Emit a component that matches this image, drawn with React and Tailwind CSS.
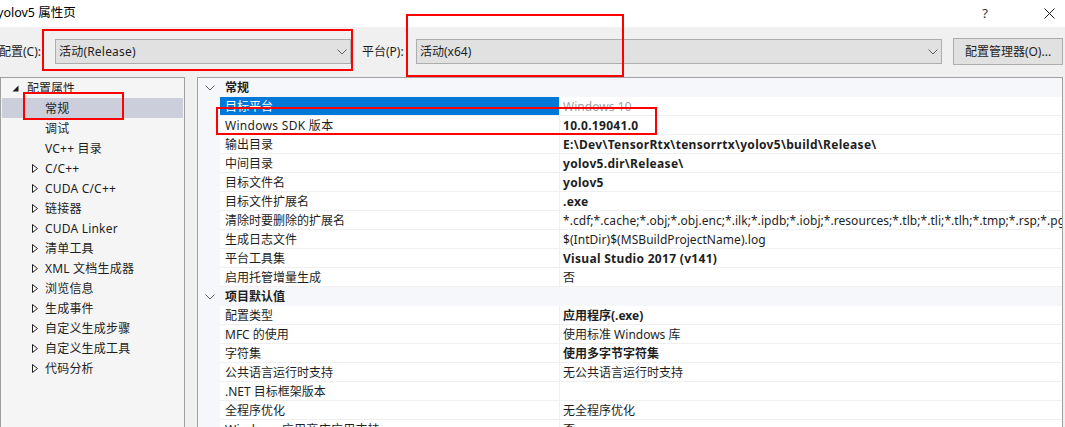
import React from "react";

const font = { fontFamily: '"Noto Sans", "Noto Sans CJK SC", sans-serif' };

const isLatin = (s) => /^[\x00-\x7f]+$/.test(s);

function Chevron({ className = "" }) {
  return (
    <svg width="10" height="6" viewBox="0 0 10 6" className={className}>
      <path d="M0.5 0.5 L5 5 L9.5 0.5" fill="none" stroke="#606060" strokeWidth="1" />
    </svg>
  );
}

function TriOpen() {
  return (
    <svg width="7" height="7" viewBox="0 0 7 7">
      <path d="M6.5 0.5 L6.5 6.5 L0.5 6.5 Z" fill="#1e1e1e" />
    </svg>
  );
}

function TriClosed() {
  return (
    <svg width="6" height="9" viewBox="0 0 6 9">
      <path d="M0.5 0.5 L5.5 4.5 L0.5 8.5 Z" fill="none" stroke="#1e1e1e" strokeWidth="1" />
    </svg>
  );
}

const tree = [
  { t: "常规", sel: true },
  { t: "调试" },
  { t: "VC++ 目录" },
  { t: "C/C++", c: true },
  { t: "CUDA C/C++", c: true },
  { t: "链接器", c: true },
  { t: "CUDA Linker", c: true },
  { t: "清单工具", c: true },
  { t: "XML 文档生成器", c: true },
  { t: "浏览信息", c: true },
  { t: "生成事件", c: true },
  { t: "自定义生成步骤", c: true },
  { t: "自定义生成工具", c: true },
  { t: "代码分析", c: true },
];

const groups = [
  {
    h: "常规",
    rows: [
      { n: "目标平台", v: "Windows 10", sel: true },
      { n: "Windows SDK 版本", v: "10.0.19041.0", b: true },
      { n: "输出目录", v: "E:\\Dev\\TensorRtx\\tensorrtx\\yolov5\\build\\Release\\", b: true },
      { n: "中间目录", v: "yolov5.dir\\Release\\", b: true },
      { n: "目标文件名", v: "yolov5", b: true },
      { n: "目标文件扩展名", v: ".exe", b: true },
      { n: "清除时要删除的扩展名", v: "*.cdf;*.cache;*.obj;*.obj.enc;*.ilk;*.ipdb;*.iobj;*.resources;*.tlb;*.tli;*.tlh;*.tmp;*.rsp;*.pgc;*.pgd;*.meta;*.tlog;*.manifest;*.res;*.pch;*.exp;*.idb;*.rep;*.xdc;*.pdb;*_manifest.rc;*.bsc;*.sbr;*.xml;*.metagen;*.bi" },
      { n: "生成日志文件", v: "$(IntDir)$(MSBuildProjectName).log" },
      { n: "平台工具集", v: "Visual Studio 2017 (v141)", b: true },
      { n: "启用托管增量生成", v: "否" },
    ],
  },
  {
    h: "项目默认值",
    rows: [
      { n: "配置类型", v: "应用程序(.exe)", b: true },
      { n: "MFC 的使用", v: "使用标准 Windows 库" },
      { n: "字符集", v: "使用多字节字符集", b: true },
      { n: "公共语言运行时支持", v: "无公共语言运行时支持" },
      { n: ".NET 目标框架版本", v: "" },
      { n: "全程序优化", v: "无全程序优化" },
      { n: "Windows 应用商店应用支持", v: "否" },
    ],
  },
];

export default function App() {
  return (
    <div
      className="relative w-[1065px] h-[427px] overflow-hidden bg-[#f0f0f0] text-[12px] text-[#1e1e1e] flex flex-col"
      style={font}
    >
      {/* title bar */}
      <div className="h-[27px] bg-white flex items-center shrink-0">
        <span className="ml-[-3px] text-[12.5px] text-black">yolov5 属性页</span>
        <span className="ml-auto mr-[56px] text-[13px] text-[#333]">?</span>
        <svg width="11" height="11" viewBox="0 0 11 11" className="mr-[10px]">
          <path d="M0.5 0.5 L10.5 10.5 M10.5 0.5 L0.5 10.5" stroke="#222" strokeWidth="1" />
        </svg>
      </div>

      {/* toolbar */}
      <div className="h-[50px] flex items-center shrink-0 pb-[1px]">
        <span className="ml-[-1px] w-[56px] whitespace-nowrap pt-[1px]">配置(C):</span>
        <div className="w-[296px] h-[25px] bg-[#e1e1e1] border border-[#adadad] flex items-center pl-[3px] pr-[3px]">
          <span className="pt-[1px] tracking-[0.2px]">活动(Release)</span>
          <Chevron className="ml-auto" />
        </div>
        <span className="ml-[11px] w-[54px] whitespace-nowrap pt-[1px]">平台(P):</span>
        <div className="w-[526px] h-[25px] bg-[#e1e1e1] border border-[#adadad] flex items-center pl-[3px] pr-[3px]">
          <span className="pt-[1px]">活动(x64)</span>
          <Chevron className="ml-auto" />
        </div>
        <div className="ml-[11px] w-[110px] h-[27px] bg-[#e1e1e1] border border-[#adadad] flex items-center justify-center whitespace-nowrap pt-[1px]">
          配置管理器(O)...
        </div>
      </div>

      {/* panels */}
      <div className="flex flex-1 min-h-0">
        {/* tree */}
        <div className="w-[185px] bg-[#f5f5f5] border border-[#a0a0a0] border-b-0 flex flex-col pt-0">
          <div className="h-[20px] flex items-center">
            <span className="w-[26px] flex justify-end pr-[8px] pt-[1px]"><TriOpen /></span>
            <span className="pt-[1px]">配置属性</span>
          </div>
          {tree.map((it) => (
            <div
              key={it.t}
              className={`h-[20px] flex items-center ${it.sel ? "bg-[#cccedb] mx-[1px]" : ""}`}
            >
              <span className={`${it.sel ? "w-[43px]" : "w-[44px]"} flex justify-start pl-[31px]`}>
                {it.c ? <TriClosed /> : null}
              </span>
              <span className="whitespace-nowrap pt-[1px] tracking-[0.2px]">{it.t}</span>
            </div>
          ))}
        </div>

        {/* grid */}
        <div className="ml-[12px] w-[866px] bg-[#f5f7fa] border border-[#a0a0a0] border-b-0 flex flex-col">
          {groups.map((g) => (
            <React.Fragment key={g.h}>
              <div className="h-[19px] flex items-center shrink-0">
                <span className="w-[22px] flex justify-center pl-[2px]"><Chevron /></span>
                <span className="pl-[5px] pt-[1px] font-bold">{g.h}</span>
              </div>
              {g.rows.map((r) => (
                <div key={r.n} className="h-[19px] flex shrink-0 ml-[22px]">
                  <div
                    className={`w-[339px] h-[19px] flex items-center pl-[5px] pt-[1px] border-b border-[#f0f0f0] whitespace-nowrap overflow-hidden ${
                      r.sel ? "bg-[#0078d7] text-white" : "bg-white"
                    } ${r.n.startsWith("Windows") ? "tracking-[0.3px]" : ""}`}
                  >
                    {r.n}
                  </div>
                  <div
                    className={`flex-1 min-w-0 h-[19px] bg-white border-l border-b border-[#f0f0f0] flex items-center pl-[3px] pt-[1px] overflow-hidden whitespace-nowrap ${
                      r.b ? "font-bold" : ""
                    } ${r.sel ? "text-[#a0a0a0]" : ""} ${
                      isLatin(r.v) ? (r.b ? "tracking-[0.3px]" : "tracking-[0.05px]") : ""
                    }`}
                  >
                    {r.v}
                  </div>
                </div>
              ))}
            </React.Fragment>
          ))}
        </div>
      </div>

      {/* red highlight boxes */}
      <div className="absolute left-[42px] top-[29px] w-[311px] h-[42px] border-2 border-[#ff0000]" />
      <div className="absolute left-[406px] top-[14px] w-[218px] h-[63px] border-2 border-[#ff0000]" />
      <div className="absolute left-[23px] top-[92px] w-[101px] h-[28px] border-2 border-[#ff0000]" />
      <div className="absolute left-[216px] top-[107px] w-[441px] h-[28px] border-2 border-[#ff0000]" />
    </div>
  );
}
